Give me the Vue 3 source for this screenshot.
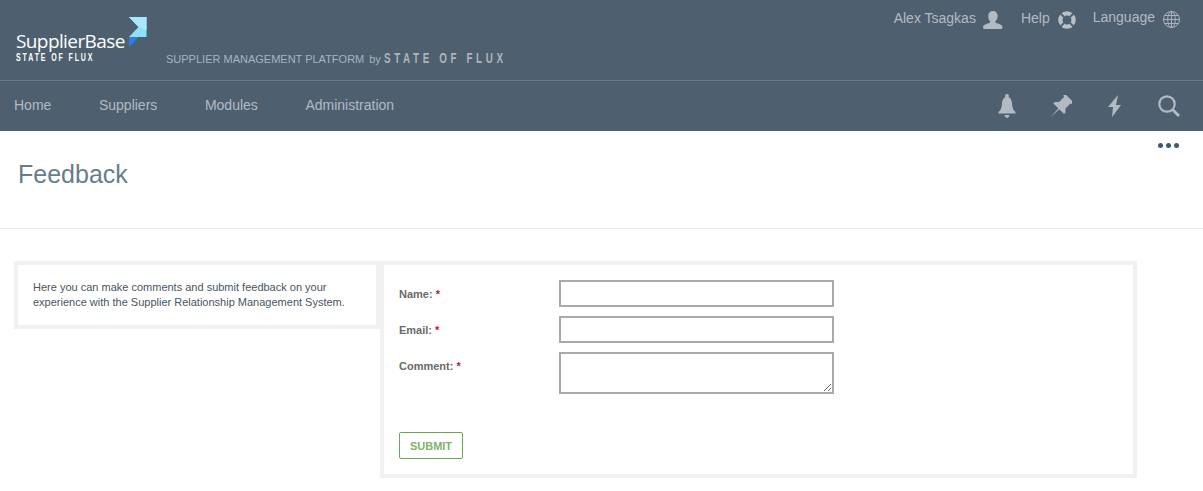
<script setup>
const navItems = ['Home', 'Suppliers', 'Modules', 'Administration']
</script>

<template>
  <div class="page">
    <header class="header">
      <div class="top">
        <div class="brand">
          <div class="logo">
            <div class="logo-name">SupplierBase</div>
            <div class="logo-sub">STATE OF FLUX</div>
            <svg class="logo-mark" width="18" height="31" viewBox="0 0 18 31">
              <polygon points="0,0 17.5,0 17.5,20 0,20 9.5,10" fill="#8fe0fb" />
              <polygon points="0,0 17.5,0 17.5,13 9.500,10" fill="#a9e8ff" />
              <polygon points="0,20 9.5,20 0,30" fill="#2a80ea" />
            </svg>
          </div>
          <div class="tagline">
            <span class="tag-main">SUPPLIER MANAGEMENT PLATFORM</span>
            <span class="tag-by">by</span>
            <span class="tag-flux">STATE OF FLUX</span>
          </div>
        </div>
        <div class="links">
          <a class="link link-user">
            <span>Alex Tsagkas</span>
            <svg width="20" height="18" viewBox="0 0 20 18"><path d="M10 0c3 0 4.700 2.200 4.700 5 0 2.200-.9 4.200-2.200 5.300-.4.4-.3 1.100.3 1.400 2.800 1.200 6.700 1.700 6.700 4.400 0 1.200-.5 1.900-1.500 1.900H1.500C.5 18 0 17.300 0 16.100c0-2.700 3.900-3.200 6.700-4.400.6-.3.700-1 .3-1.400C5.700 9.200 5.300 7.200 5.300 5 5.300 2.200 7 0 10 0z" fill="#b3bac2" /></svg>
          </a>
          <a class="link link-help">
            <span>Help</span>
            <svg width="18" height="18" viewBox="0 0 18 18">
              <circle cx="9" cy="9" r="6.600" fill="none" stroke="#b9c0c8" stroke-width="4.300" />
              <path d="M2 2 6 6M16 2 12 6M2 16 6 12M16 16 12 12" stroke="#4e5f70" stroke-width="1.800" />
            </svg>
          </a>
          <a class="link link-lang">
            <span>Language</span>
            <svg width="17" height="17" viewBox="0 0 17 17" fill="none" stroke="#aab2bd" stroke-width="1">
              <circle cx="8.500" cy="8.500" r="8" />
              <ellipse cx="8.500" cy="8.500" rx="3.800" ry="8" />
              <path d="M8.500 .5v16M.5 8.500h16M1.700 4.500h13.600M1.700 12.500h13.600" />
            </svg>
          </a>
        </div>
      </div>
      <nav class="nav">
        <div class="menu">
          <a v-for="item in navItems" :key="item" class="menu-item">{{ item }}</a>
        </div>
        <div class="tools">
          <svg class="tool-bell" width="18" height="24" viewBox="0 0 18 24">
            <path d="M9 0a2 2 0 0 1 1.500 3.300C13 4 13.800 6.500 14 9.500 14.300 13.500 15 16 17.500 18v1.500H.5V18C3 16 3.700 13.500 4 9.500 4.200 6.500 5 4 7.500 3.300A2 2 0 0 1 9 0z" fill="#b3bac2" />
            <path d="M6.500 21h5C11 23 10 24 9 24s-2-1-2.500-3z" fill="#b3bac2" />
          </svg>
          <svg class="tool-pin" width="22" height="22" viewBox="0 0 22 22">
            <g transform="translate(-0.500 1) rotate(45 11 11)">
              <path d="M4.500-1.500h13v2l-2 1v7l3 3v2h-15v-2l3-3v-7l-2-1z" fill="#b3bac2" />
              <path d="M10.300 13h1.400L11 25z" fill="#b3bac2" />
            </g>
          </svg>
          <svg class="tool-bolt" width="14" height="22" viewBox="0 0 14 22">
            <path d="M10 0 0 12h5L4 22 13 10H8z" fill="#b3bac2" />
          </svg>
          <svg class="tool-search" width="22" height="22" viewBox="0 0 22 22" fill="none" stroke="#b3bac2">
            <circle cx="9" cy="9" r="7.700" stroke-width="2.200" />
            <path d="M14.500 14.500 21 21" stroke-width="2.800" />
          </svg>
        </div>
      </nav>
    </header>

    <div class="dots"><i></i><i></i><i></i></div>

    <section class="title-bar">
      <h1 class="title">Feedback</h1>
    </section>

    <main class="content">
      <aside class="intro">
        <p>Here you can make comments and submit feedback on your experience with the Supplier Relationship Management System.</p>
      </aside>
      <form class="form" @submit.prevent>
        <div class="row">
          <label class="label" for="f-name">Name: <b class="req">*</b></label>
          <input id="f-name" class="field" type="text" />
        </div>
        <div class="row">
          <label class="label" for="f-email">Email: <b class="req">*</b></label>
          <input id="f-email" class="field" type="text" />
        </div>
        <div class="row">
          <label class="label" for="f-comment">Comment: <b class="req">*</b></label>
          <textarea id="f-comment" class="field area"></textarea>
        </div>
        <button class="submit" type="submit">SUBMIT</button>
      </form>
    </main>
  </div>
</template>

<style>
html, body { margin: 0; background: #fff; overflow: hidden; }
</style>

<style scoped>
.page {
  width: 1203px;
  height: 491px;
  font-family: "Liberation Sans", Arial, sans-serif;
  overflow: hidden;
}
.header { background: #4e5f70; height: 131px; }
.top {
  height: 80px;
  border-bottom: 1px solid #6b7a8a;
  display: flex;
  justify-content: space-between;
}
.brand { display: flex; align-items: flex-start; }
.logo {
  position: relative;
  width: 150px;
  margin-left: 16px;
  padding-top: 29px;
}
.logo-name {
  font-family: "Open Sans", sans-serif;
  font-size: 19px;
  line-height: 24px;
  letter-spacing: -0.6px;
  color: #fff;
}
.logo-sub {
  font-size: 10px;
  line-height: 10px;
  font-weight: 700;
  letter-spacing: 2.700px;
  white-space: nowrap;
  color: #fff;
  transform: scaleX(0.7);
  transform-origin: left center;
}
.logo-mark { position: absolute; left: 113px; top: 17px; }
.tagline {
  margin-top: 49px;
  display: flex;
  align-items: baseline;
  height: 20px;
  color: #a6b3c2;
}
.tag-main { font-size: 11px; line-height: 20px; }
.tag-by { font-size: 11px; margin-left: 5px; color: #aab3bc; }
.tag-flux {
  display: inline-block;
  font-size: 14px;
  font-weight: 700;
  letter-spacing: 5.200px;
  margin-left: 3px;
  white-space: nowrap;
  color: #aeb4bb;
  transform: scaleX(0.7);
  transform-origin: left center;
}
.links { display: flex; align-items: flex-start; padding: 6px 23px 0 0; }
.link { display: flex; align-items: center; font-size: 14px; line-height: 18px; color: #b3bac2; }
.link-user svg { margin-left: 7px; margin-top: 5px; }
.link-help { margin-left: 18px; }
.link-help svg { margin-left: 8px; margin-top: 5px; }
.link-lang { margin-left: 17px; }
.link-lang svg { margin-left: 8px; margin-top: 5px; }

.nav {
  height: 50px;
  display: flex;
  justify-content: space-between;
  align-items: center;
}
.menu { display: flex; gap: 47.600px; padding: 0 0 2px 14px; }
.menu-item { font-size: 14px; line-height: 18px; color: #b3bac2; }
.tools { display: flex; align-items: center; padding-right: 23px; }
.tool-pin { margin-left: 34px; }
.tool-bolt { margin-left: 36px; }
.tool-search { margin-left: 36px; }

.dots { display: flex; justify-content: flex-end; gap: 3px; height: 0; padding-right: 24px; transform: translateY(12px); }
.dots i { width: 5px; height: 5px; border-radius: 50%; background: #3f5a73; display: block; }

.title-bar {
  height: 97px;
  border-bottom: 1px solid #e6ecf1;
}
.title {
  margin: 0;
  padding: 28px 0 0 18px;
  font-size: 25px;
  line-height: 30px;
  font-weight: 400;
  color: #677d8c;
}
.content {
  display: flex;
  align-items: flex-start;
  padding: 32px 0 0 14px;
}
.intro {
  width: 366px;
  height: 68px;
  box-sizing: border-box;
  border: 4px solid #f1f1f1;
  padding: 15px 15px;
}
.intro p {
  margin: 0;
  font-size: 11px;
  line-height: 15px;
  color: #4a5560;
}
.form {
  width: 757px;
  height: 217px;
  box-sizing: border-box;
  border: 4px solid #f1f1f1;
  padding: 15px 15px 0;
}
.row { display: flex; align-items: flex-start; margin-bottom: 9px; }
.label {
  width: 160px;
  padding-top: 7px;
  font-size: 11px;
  line-height: 14px;
  font-weight: 700;
  color: #6a6a6a;
}
.req { color: #c8102e; }
.field {
  display: block;
  width: 275px;
  height: 27px;
  box-sizing: border-box;
  border: 2px solid #a9a9a9;
  border-radius: 0;
  background: #fff;
  padding: 0 4px;
  margin: 0;
  outline: none;
}
.area { height: 42px; resize: vertical; }
.submit {
  display: block;
  width: 64px;
  height: 27px;
  margin-top: 38px;
  padding: 0;
  box-sizing: border-box;
  background: #fff;
  border: 1px solid #6aa84f;
  border-radius: 2px;
  font-family: inherit;
  font-size: 11px;
  font-weight: 700;
  color: #7fb36a;
}
</style>
